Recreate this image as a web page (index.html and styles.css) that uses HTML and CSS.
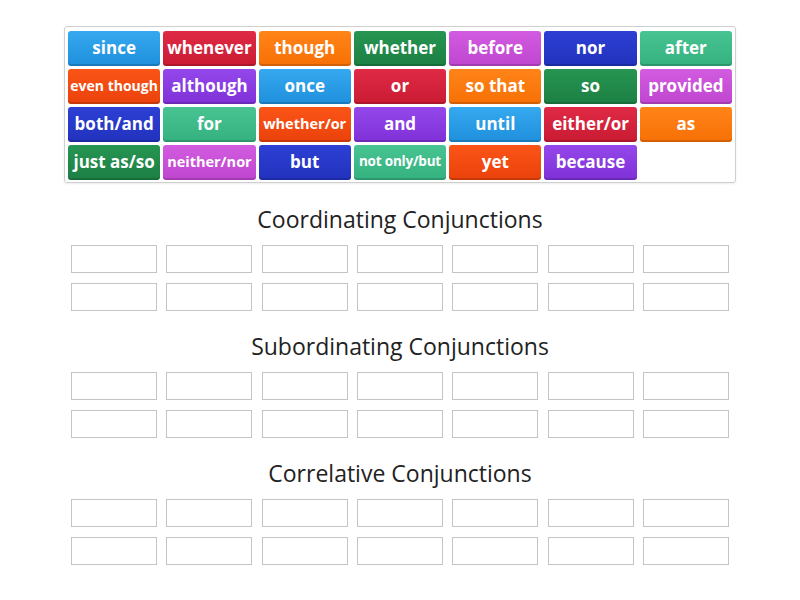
FILE: index.html
```html
<!DOCTYPE html>
<html lang="en">
<head>
    <meta charset="UTF-8">
    <title>Conjunctions - Group Sort</title>
    <link rel="stylesheet" href="styles.css">
</head>
<body>
    <div class="board">
        <!-- Word bank -->
        <div class="bank">
            <div class="tile c-blue">since</div>
            <div class="tile c-crimson">whenever</div>
            <div class="tile c-orange">though</div>
            <div class="tile c-green">whether</div>
            <div class="tile c-pink">before</div>
            <div class="tile c-navy">nor</div>
            <div class="tile c-teal">after</div>

            <div class="tile c-red small">even though</div>
            <div class="tile c-purple">although</div>
            <div class="tile c-blue">once</div>
            <div class="tile c-crimson">or</div>
            <div class="tile c-orange">so that</div>
            <div class="tile c-green">so</div>
            <div class="tile c-pink">provided</div>

            <div class="tile c-navy">both/and</div>
            <div class="tile c-teal">for</div>
            <div class="tile c-red mid">whether/or</div>
            <div class="tile c-purple">and</div>
            <div class="tile c-blue">until</div>
            <div class="tile c-crimson">either/or</div>
            <div class="tile c-orange">as</div>

            <div class="tile c-green">just as/so</div>
            <div class="tile c-pink mid">neither/nor</div>
            <div class="tile c-navy">but</div>
            <div class="tile c-teal tiny">not only/but</div>
            <div class="tile c-red">yet</div>
            <div class="tile c-purple">because</div>
        </div>

        <!-- Drop groups -->
        <div class="group">
            <h2>Coordinating Conjunctions</h2>
            <div class="slots">
                <div class="slot"></div><div class="slot"></div><div class="slot"></div><div class="slot"></div><div class="slot"></div><div class="slot"></div><div class="slot"></div>
                <div class="slot"></div><div class="slot"></div><div class="slot"></div><div class="slot"></div><div class="slot"></div><div class="slot"></div><div class="slot"></div>
            </div>
        </div>

        <div class="group">
            <h2>Subordinating Conjunctions</h2>
            <div class="slots">
                <div class="slot"></div><div class="slot"></div><div class="slot"></div><div class="slot"></div><div class="slot"></div><div class="slot"></div><div class="slot"></div>
                <div class="slot"></div><div class="slot"></div><div class="slot"></div><div class="slot"></div><div class="slot"></div><div class="slot"></div><div class="slot"></div>
            </div>
        </div>

        <div class="group">
            <h2>Correlative Conjunctions</h2>
            <div class="slots">
                <div class="slot"></div><div class="slot"></div><div class="slot"></div><div class="slot"></div><div class="slot"></div><div class="slot"></div><div class="slot"></div>
                <div class="slot"></div><div class="slot"></div><div class="slot"></div><div class="slot"></div><div class="slot"></div><div class="slot"></div><div class="slot"></div>
            </div>
        </div>
    </div>
</body>
</html>
```

FILE: styles.css
```css
* { margin: 0; padding: 0; box-sizing: border-box; }
body { font-family: 'Open Sans', 'Noto Sans', sans-serif; background: #fff; color: #222; }
.board { width: 672px; margin: 26px auto 0; }

.bank { display: grid; grid-template-columns: repeat(7, 1fr); grid-auto-rows: 35px; gap: 3px; padding: 4px 3px 2px 3px; border: 1px solid #cfcfcf; border-radius: 3px; box-shadow: 0 1px 2px rgba(0,0,0,0.08); }
.tile { display: flex; align-items: center; justify-content: center; padding-bottom: 3px; color: #fff; font-weight: 700; font-size: 17px; border-radius: 3px; white-space: nowrap; box-shadow: inset 0 -2px 0 rgba(0,0,0,0.15); }
.tile.small { font-size: 14px; }
.tile.mid { font-size: 14.5px; }
.tile.tiny { font-size: 13.5px; letter-spacing: -0.2px; }

.c-blue { background: linear-gradient(#35a9f0, #1f8fdc); }
.c-crimson { background: linear-gradient(#e02a45, #c91b33); }
.c-orange { background: linear-gradient(#ff8418, #f77006); }
.c-green { background: linear-gradient(#269552, #1c7f43); }
.c-pink { background: linear-gradient(#d25ce0, #bf45cf); }
.c-navy { background: linear-gradient(#2d40d4, #2232bd); }
.c-teal { background: linear-gradient(#48c493, #35b07f); }
.c-red { background: linear-gradient(#fb5417, #ea420b); }
.c-purple { background: linear-gradient(#9447ea, #7f31d8); }

.group { padding: 0 7px; }
.group h2 { font-weight: 400; font-size: 23px; text-align: center; color: #222; line-height: 30px; margin: 20px 0 11px; }
.group:nth-of-type(2) h2 { margin-top: 21px; }
.slots { display: grid; grid-template-columns: repeat(7, 86px); justify-content: space-between; grid-auto-rows: 28px; row-gap: 10px; }
.slot { border: 1px solid #c4c4c4; background: #fff; }
```
